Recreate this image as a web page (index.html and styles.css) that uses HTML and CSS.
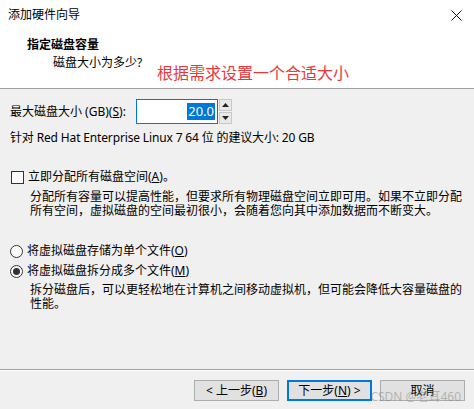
FILE: index.html
```html
<!DOCTYPE html>
<html lang="zh-CN">
<head>
<meta charset="utf-8">
<link rel="stylesheet" href="styles.css">
</head>
<body>
<div class="window">
  <div class="top">
    <div class="titlebar">
      <span class="title">添加硬件向导</span>
      <svg class="close" width="11" height="11" viewBox="0 0 11 11"><path d="M0.5 0.5 L10.5 10.5 M10.5 0.5 L0.5 10.5" stroke="#111" stroke-width="1"/></svg>
    </div>
    <div class="header">
      <div class="h-title">指定磁盘容量</div>
      <div class="h-sub">磁盘大小为多少?</div>
      <div class="note">根据需求设置一个合适大小</div>
    </div>
  </div>
  <div class="content">
    <div class="size-row">
      <span class="label">最大磁盘大小 (GB)(<u>S</u>):</span>
      <div class="spin">
        <div class="input"><span class="sel">20.0</span></div>
        <div class="arrows">
          <div class="arr up"><svg width="7" height="4" viewBox="0 0 7 4"><path d="M0 4 L3.5 0 L7 4 Z" fill="#222"/></svg></div>
          <div class="arr down"><svg width="7" height="4" viewBox="0 0 7 4"><path d="M0 0 L3.5 4 L7 0 Z" fill="#222"/></svg></div>
        </div>
      </div>
    </div>
    <div class="rec">针对 Red Hat Enterprise Linux 7 64 位 的建议大小: 20 GB</div>
    <div class="opt check-row"><span class="checkbox"></span><span>立即分配所有磁盘空间(<u>A</u>)。</span></div>
    <div class="desc">分配所有容量可以提高性能，但要求所有物理磁盘空间立即可用。如果不立即分配所有空间，虚拟磁盘的空间最初很小，会随着您向其中添加数据而不断变大。</div>
    <div class="opt radio-row first"><span class="radio"></span><span>将虚拟磁盘存储为单个文件(<u>O</u>)</span></div>
    <div class="opt radio-row second"><span class="radio on"></span><span>将虚拟磁盘拆分成多个文件(<u>M</u>)</span></div>
    <div class="desc d2">拆分磁盘后，可以更轻松地在计算机之间移动虚拟机，但可能会降低大容量磁盘的性能。</div>
  </div>
  <div class="footer">
    <div class="buttons">
      <button class="btn">&lt; 上一步(<u>B</u>)</button>
      <button class="btn default">下一步(<u>N</u>) &gt;</button>
      <button class="btn">取消</button>
    </div>
    <div class="watermark">CSDN @老耳460</div>
  </div>
</div>
</body>
</html>
```
FILE: styles.css
```css
* { box-sizing: border-box; }
html, body { margin: 0; padding: 0; }
body {
  width: 474px;
  height: 409px;
  overflow: hidden;
  background: #f0f0f0;
  font-family: "Noto Sans", "Noto Sans CJK SC", sans-serif;
  font-size: 12px;
  color: #000;
}
.window {
  width: 474px;
  height: 409px;
  display: flex;
  flex-direction: column;
}
.top {
  background: #fff;
  height: 89px;
  border-bottom: 1px solid #a0a0a0;
  position: relative;
}
.titlebar {
  height: 30px;
  display: flex;
  align-items: center;
  justify-content: space-between;
  padding: 0 12px 0 8px;
}
.title { line-height: 16px; }
.close { display: block; }
.header { padding-left: 27px; }
.h-title {
  font-weight: bold;
  line-height: 16px;
  margin-top: 7px;
}
.h-sub {
  line-height: 16px;
  margin-top: 2px;
  padding-left: 26px;
}
.note {
  position: absolute;
  left: 157px;
  top: 62px;
  font-family: "Noto Sans CJK SC", sans-serif;
  font-size: 16px;
  line-height: 20px;
  color: #e8383d;
}
.content {
  padding-left: 10px;
  display: flex;
  flex-direction: column;
}
.size-row {
  margin-top: 10px;
  display: flex;
  align-items: center;
  height: 25px;
}
.label { width: 126px; line-height: 16px; }
.spin { display: flex; align-items: center; }
.input {
  width: 82px;
  height: 25px;
  background: #fff;
  border: 1px solid #0078d7;
  display: flex;
  align-items: center;
  justify-content: flex-end;
  padding-right: 2px;
}
.sel {
  background: #0078d7;
  color: #fff;
  font-size: 13px;
  line-height: 17px;
  padding: 0 1px;
}
.arrows {
  display: flex;
  flex-direction: column;
  margin-left: 1px;
}
.arr {
  width: 13px;
  height: 12px;
  background: #e8e8e8;
  border: 1px solid #c8c8c8;
  display: flex;
  align-items: center;
  justify-content: center;
}
.arr svg { display: block; }
.arr.down { margin-top: 1px; }
.rec {
  margin-top: 6px;
  line-height: 16px;
  letter-spacing: -0.15px;
}
.opt {
  display: flex;
  align-items: center;
  line-height: 16px;
  height: 16px;
}
.check-row { margin-top: 23px; }
.checkbox {
  width: 13px;
  height: 13px;
  border: 1px solid #333;
  background: #fff;
  margin: 0 4px 0 1px;
}
.desc {
  margin-top: 5px;
  padding-left: 20px;
  padding-right: 8px;
  line-height: 14px;
}
.radio-row.first { margin-top: 25px; }
.radio-row.second { margin-top: 4px; }
.d2 { margin-top: 4px; }
.radio {
  width: 13px;
  height: 13px;
  border: 1px solid #333;
  border-radius: 50%;
  background: #fff;
  margin: 0 4px 0 0;
  display: flex;
  align-items: center;
  justify-content: center;
}
.radio.on::after {
  content: "";
  width: 7px;
  height: 7px;
  border-radius: 50%;
  background: #333;
}
.footer {
  margin-top: auto;
  border-top: 1px solid #a0a0a0;
  box-shadow: inset 0 1px 0 #fff;
  padding: 10px 9px 8px 0;
  position: relative;
}
.buttons {
  display: flex;
  justify-content: flex-end;
  gap: 8px;
}
.btn {
  width: 85px;
  height: 21px;
  background: #e1e1e1;
  border: 1px solid #adadad;
  font-family: "Noto Sans", "Noto Sans CJK SC", sans-serif;
  font-size: 12px;
  color: #000;
  padding: 0;
  line-height: 16px;
}
.btn.default { border: 2px solid #0078d7; }
.watermark {
  position: absolute;
  right: 13px;
  top: 19px;
  font-family: "Noto Sans", "Noto Sans CJK SC", sans-serif;
  font-size: 12px;
  color: rgba(130,130,130,0.5);
  line-height: 16px;
}
```
